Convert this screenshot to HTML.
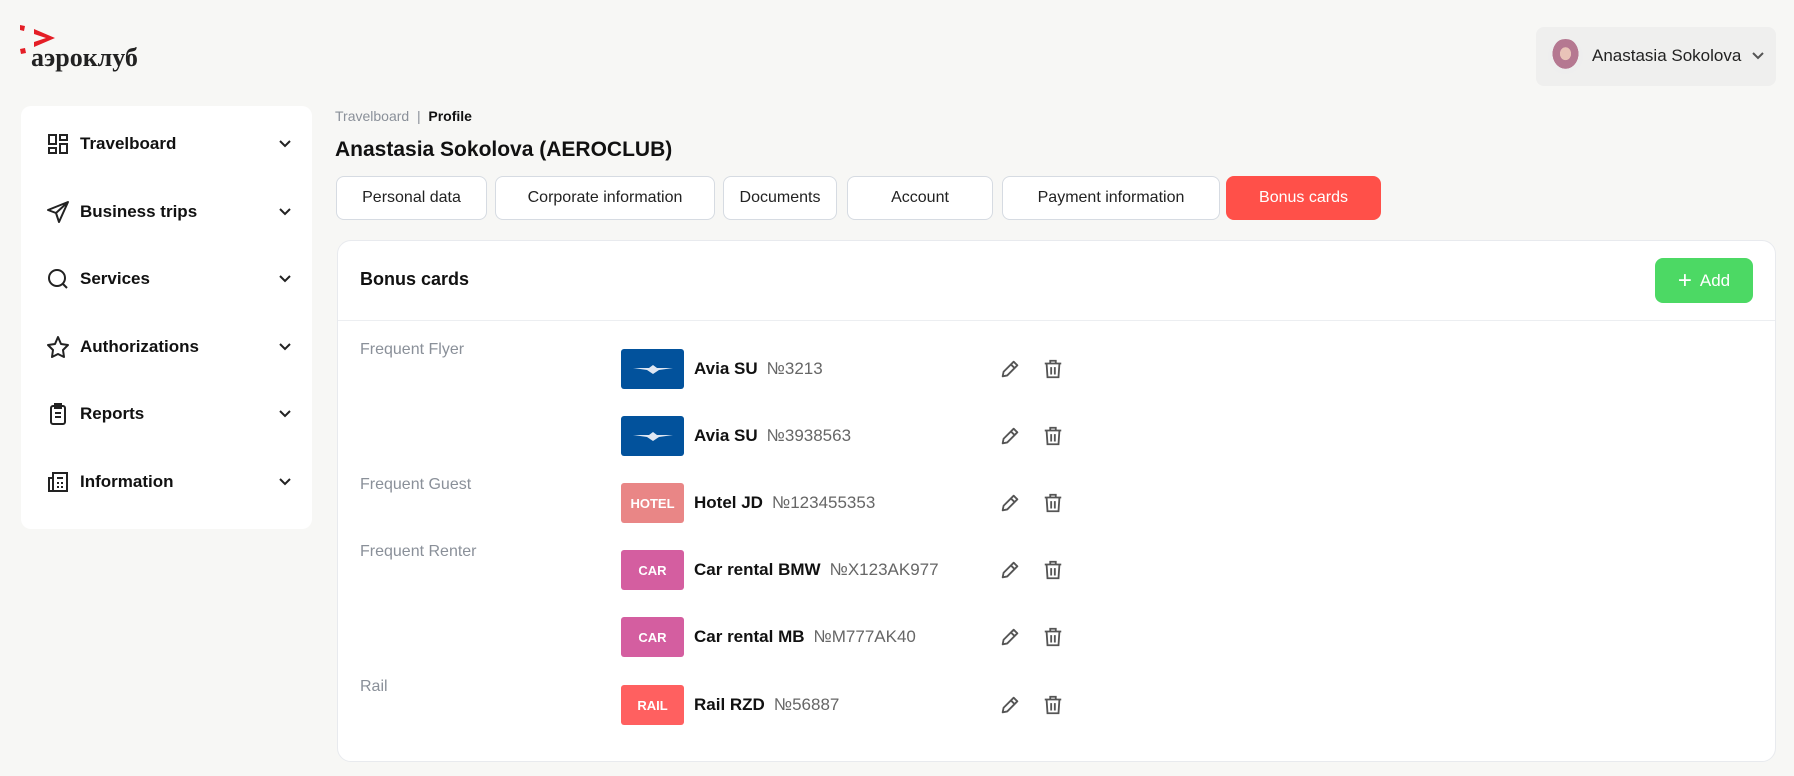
<!DOCTYPE html>
<html><head><meta charset="utf-8"><style>
*{box-sizing:border-box;margin:0;padding:0}
body{width:1794px;height:776px;background:#f7f7f5;font-family:"Liberation Sans",sans-serif;color:#111;position:relative;overflow:hidden}
.a{position:absolute}
.side{left:21px;top:106px;width:291px;height:423px;background:#fff;border-radius:10px}
.nav{position:absolute;left:25px;width:245px;height:30px;display:flex;align-items:center;font-weight:bold;font-size:17px}
.nav svg.i{width:24px;height:24px;margin-right:10px}
.nav .ch{position:absolute;right:0;top:11px}
.tab{position:absolute;top:176px;height:44px;border:1px solid #d6dbe2;border-radius:8px;background:#fff;font-size:16px;color:#222;display:flex;align-items:center;justify-content:center}
.card{left:337px;top:240px;width:1439px;height:522px;background:#fff;border:1px solid #e8eaee;border-radius:14px}
.lbl{position:absolute;left:22px;font-size:16px;color:#8a9099}
.row{position:absolute;left:284px;width:500px;height:40px;display:flex;align-items:center;white-space:nowrap}
.logo{flex:0 0 63px;width:63px;height:40px;border-radius:3px;display:flex;align-items:center;justify-content:center;color:#fff;font-weight:bold;font-size:13px;margin-right:10px}
.nm{font-weight:bold;font-size:17px}
.no{font-size:17px;color:#666;margin-left:9px}
.ic{position:absolute;left:378px;top:9px}
.ic2{position:absolute;left:421px;top:8px}
</style></head><body>
<svg class="a" style="left:20px;top:25px" width="38" height="32" viewBox="0 0 38 32"><path d="M0 0l5 1-1 5-4-1z M0 24l5-1 1 5-5 1z" fill="#e41e26"/><path d="M14 4l21 9-21 9 0-5 12-4-12-4z" fill="#e41e26"/></svg>
<div class="a" style="left:31px;top:43px;font-family:'Liberation Serif',serif;font-weight:bold;font-size:26px;color:#222">аэроклуб</div>

<div class="a" style="left:1536px;top:27px;width:240px;height:59px;background:#efefee;border-radius:8px"></div>
<div class="a" style="left:1548px;top:39px;width:35px;height:35px;border-radius:50%;background:radial-gradient(ellipse at 50% 42%,#e9c3b8 0 22%,#b57891 23% 52%,#eee 53%)"></div>
<div class="a" style="left:1592px;top:46px;font-size:17px;color:#222">Anastasia Sokolova</div>
<svg class="a" style="left:1752px;top:52px" width="12" height="8" viewBox="0 0 12 8"><path d="M1 1l5 5 5-5" stroke="#555" stroke-width="2" fill="none"/></svg>

<div class="a side">
<div class="nav" style="top:23px"><svg class="i" viewBox="0 0 24 24" fill="none" stroke="#222" stroke-width="2"><rect x="3" y="3" width="7" height="9"/><rect x="14" y="3" width="7" height="5"/><rect x="3" y="16" width="7" height="5"/><rect x="14" y="12" width="7" height="9"/></svg>Travelboard<svg class="ch" width="12" height="8" viewBox="0 0 12 8"><path d="M1 1l5 5 5-5" stroke="#222" stroke-width="2" fill="none"/></svg></div>
<div class="nav" style="top:91px"><svg class="i" viewBox="0 0 24 24" fill="none" stroke="#222" stroke-width="2" stroke-linejoin="round"><path d="M22 2L2 10l8 3 3 9z M22 2L10 13"/></svg>Business trips<svg class="ch" width="12" height="8" viewBox="0 0 12 8"><path d="M1 1l5 5 5-5" stroke="#222" stroke-width="2" fill="none"/></svg></div>
<div class="nav" style="top:158px"><svg class="i" viewBox="0 0 24 24" fill="none" stroke="#222" stroke-width="2"><circle cx="11" cy="11" r="8"/><path d="M17 17l4 4"/></svg>Services<svg class="ch" width="12" height="8" viewBox="0 0 12 8"><path d="M1 1l5 5 5-5" stroke="#222" stroke-width="2" fill="none"/></svg></div>
<div class="nav" style="top:226px"><svg class="i" viewBox="0 0 24 24" fill="none" stroke="#222" stroke-width="2" stroke-linejoin="round"><path d="M12 2l3 7 7 1-5 5 1 7-6-3-6 3 1-7-5-5 7-1z"/></svg>Authorizations<svg class="ch" width="12" height="8" viewBox="0 0 12 8"><path d="M1 1l5 5 5-5" stroke="#222" stroke-width="2" fill="none"/></svg></div>
<div class="nav" style="top:293px"><svg class="i" viewBox="0 0 24 24" fill="none" stroke="#222" stroke-width="2"><rect x="5" y="4" width="14" height="18" rx="2"/><rect x="9" y="2" width="6" height="4"/><path d="M9 11h6M9 15h6"/></svg>Reports<svg class="ch" width="12" height="8" viewBox="0 0 12 8"><path d="M1 1l5 5 5-5" stroke="#222" stroke-width="2" fill="none"/></svg></div>
<div class="nav" style="top:361px"><svg class="i" viewBox="0 0 24 24" fill="none" stroke="#222" stroke-width="2"><rect x="7" y="3" width="14" height="18"/><path d="M7 8H3v13h4M11 8h6M11 13h2M15 13h2M11 17h2M15 17h2"/></svg>Information<svg class="ch" width="12" height="8" viewBox="0 0 12 8"><path d="M1 1l5 5 5-5" stroke="#222" stroke-width="2" fill="none"/></svg></div>
</div>

<div class="a" style="left:335px;top:108px;font-size:14px;color:#8a9099">Travelboard &nbsp;|&nbsp; <b style="color:#111">Profile</b></div>
<div class="a" style="left:335px;top:138px;font-size:21px;font-weight:bold">Anastasia Sokolova (AEROCLUB)</div>

<div class="tab" style="left:336px;width:151px">Personal data</div>
<div class="tab" style="left:495px;width:220px">Corporate information</div>
<div class="tab" style="left:723px;width:114px">Documents</div>
<div class="tab" style="left:847px;width:146px">Account</div>
<div class="tab" style="left:1002px;width:218px">Payment information</div>
<div class="tab" style="left:1226px;width:155px;background:#ff5049;border-color:#ff5049;color:#fff">Bonus cards</div>

<div class="a card">
<div class="a" style="left:22px;top:28px;font-size:18px;font-weight:bold">Bonus cards</div>
<div class="a" style="left:1317px;top:17px;width:98px;height:45px;background:#4cd964;border-radius:8px;color:#fff;font-size:17px;display:flex;align-items:center;justify-content:center"><span style="font-size:24px;margin-right:8px;font-weight:300">+</span>Add</div>
<div class="a" style="left:0;top:79px;width:100%;height:1px;background:#eceef1"></div>
<div class="lbl" style="top:100px">Frequent Flyer</div>
<div class="lbl" style="top:235px">Frequent Guest</div>
<div class="lbl" style="top:302px">Frequent Renter</div>
<div class="lbl" style="top:437px">Rail</div>
</div>

<div class="a" style="left:337px;top:240px">
<div class="row" style="top:109px"><div class="logo" style="background:#02529c"><svg width="40" height="12" viewBox="0 0 40 12"><path d="M0 5h16l4-3 4 3h16l-14 2-6 4-6-4z" fill="#dfe7f3"/></svg></div><span class="nm">Avia SU</span><span class="no">№3213</span>
<svg class="ic" width="22" height="22" viewBox="0 0 24 24" fill="none" stroke="#555" stroke-width="2" stroke-linejoin="round"><path d="M4 20l1-5L16 4l4 4L9 19zM13 7l4 4"/></svg>
<svg class="ic2" width="22" height="24" viewBox="0 0 24 24" fill="none" stroke="#555" stroke-width="2"><path d="M3 6h18M9 6V3h6v3M5 6l1 15h12l1-15M10 10v8M14 10v8"/></svg></div>
<div class="row" style="top:176px"><div class="logo" style="background:#02529c"><svg width="40" height="12" viewBox="0 0 40 12"><path d="M0 5h16l4-3 4 3h16l-14 2-6 4-6-4z" fill="#dfe7f3"/></svg></div><span class="nm">Avia SU</span><span class="no">№3938563</span>
<svg class="ic" width="22" height="22" viewBox="0 0 24 24" fill="none" stroke="#555" stroke-width="2" stroke-linejoin="round"><path d="M4 20l1-5L16 4l4 4L9 19zM13 7l4 4"/></svg>
<svg class="ic2" width="22" height="24" viewBox="0 0 24 24" fill="none" stroke="#555" stroke-width="2"><path d="M3 6h18M9 6V3h6v3M5 6l1 15h12l1-15M10 10v8M14 10v8"/></svg></div>
<div class="row" style="top:243px"><div class="logo" style="background:#e98686">HOTEL</div><span class="nm">Hotel JD</span><span class="no">№123455353</span>
<svg class="ic" width="22" height="22" viewBox="0 0 24 24" fill="none" stroke="#555" stroke-width="2" stroke-linejoin="round"><path d="M4 20l1-5L16 4l4 4L9 19zM13 7l4 4"/></svg>
<svg class="ic2" width="22" height="24" viewBox="0 0 24 24" fill="none" stroke="#555" stroke-width="2"><path d="M3 6h18M9 6V3h6v3M5 6l1 15h12l1-15M10 10v8M14 10v8"/></svg></div>
<div class="row" style="top:310px"><div class="logo" style="background:#d45ea0">CAR</div><span class="nm">Car rental BMW</span><span class="no">№X123AK977</span>
<svg class="ic" width="22" height="22" viewBox="0 0 24 24" fill="none" stroke="#555" stroke-width="2" stroke-linejoin="round"><path d="M4 20l1-5L16 4l4 4L9 19zM13 7l4 4"/></svg>
<svg class="ic2" width="22" height="24" viewBox="0 0 24 24" fill="none" stroke="#555" stroke-width="2"><path d="M3 6h18M9 6V3h6v3M5 6l1 15h12l1-15M10 10v8M14 10v8"/></svg></div>
<div class="row" style="top:377px"><div class="logo" style="background:#d45ea0">CAR</div><span class="nm">Car rental MB</span><span class="no">№M777AK40</span>
<svg class="ic" width="22" height="22" viewBox="0 0 24 24" fill="none" stroke="#555" stroke-width="2" stroke-linejoin="round"><path d="M4 20l1-5L16 4l4 4L9 19zM13 7l4 4"/></svg>
<svg class="ic2" width="22" height="24" viewBox="0 0 24 24" fill="none" stroke="#555" stroke-width="2"><path d="M3 6h18M9 6V3h6v3M5 6l1 15h12l1-15M10 10v8M14 10v8"/></svg></div>
<div class="row" style="top:445px"><div class="logo" style="background:#ff6060">RAIL</div><span class="nm">Rail RZD</span><span class="no">№56887</span>
<svg class="ic" width="22" height="22" viewBox="0 0 24 24" fill="none" stroke="#555" stroke-width="2" stroke-linejoin="round"><path d="M4 20l1-5L16 4l4 4L9 19zM13 7l4 4"/></svg>
<svg class="ic2" width="22" height="24" viewBox="0 0 24 24" fill="none" stroke="#555" stroke-width="2"><path d="M3 6h18M9 6V3h6v3M5 6l1 15h12l1-15M10 10v8M14 10v8"/></svg></div>
</div>
</body></html>
